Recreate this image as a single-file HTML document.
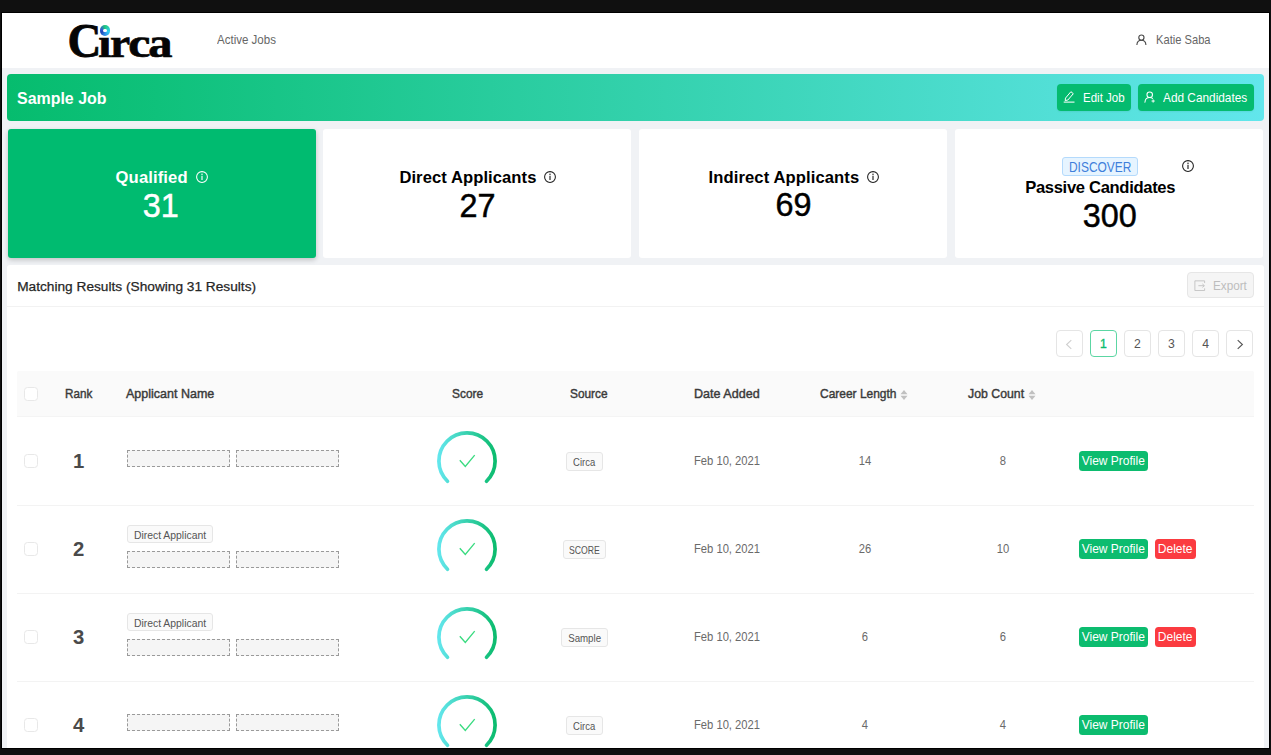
<!DOCTYPE html>
<html>
<head>
<meta charset="utf-8">
<title>Circa - Sample Job</title>
<style>
*{box-sizing:border-box;margin:0;padding:0}
html,body{width:1271px;height:755px;overflow:hidden;background:#101010}
body{position:relative;font-family:"Liberation Sans",sans-serif;color:#222;-webkit-font-smoothing:antialiased}
.abs{position:absolute}
#screen{position:absolute;left:2px;top:13px;width:1267px;height:735px;background:#f0f2f5;overflow:hidden;box-shadow:0 0 0 1px #000}
/* all children of #screen are positioned in page coords via negative offset wrapper */
#pg{position:absolute;left:-2px;top:-13px;width:1271px;height:755px}
#header{left:2px;top:13px;width:1267px;height:54.5px;background:#fff}
.t{position:absolute;white-space:nowrap;line-height:1}
#banner{left:7px;top:73.5px;width:1257px;height:47.5px;border-radius:4px;background:linear-gradient(90deg,#06bc6e 0%,#0fc17b 12%,#62e6ec 100%)}
.gbtn{position:absolute;top:84px;height:26.5px;background:#05bb6f;border-radius:4px;box-shadow:0 1px 2px rgba(0,0,0,.06)}
.card{position:absolute;top:128.5px;height:129px;width:308px;background:#fff;border-radius:3px}
.card.g{background:#00bb70;box-shadow:0 2px 5px rgba(0,0,0,.2)}
.ct{position:absolute;white-space:nowrap;font-weight:700;font-size:16.6px;line-height:1;color:#000}
.cn{position:absolute;white-space:nowrap;font-size:32.4px;line-height:1;color:#000;-webkit-text-stroke:.45px currentColor}
#panel{left:7px;top:265px;width:1257px;height:500px;background:#fff;border-radius:3px}
#thead{left:17px;top:371px;width:1236.5px;height:46px;background:#fafafa;border-bottom:1px solid #f4f4f4;border-radius:2px 2px 0 0}
.th{position:absolute;top:388px;font-size:12.6px;font-weight:400;-webkit-text-stroke:.42px #3a3a3a;color:#3a3a3a;white-space:nowrap;line-height:1;transform-origin:0 50%}
.rowline{position:absolute;left:17px;width:1236.5px;height:1px;background:#f3f3f3}
.cb{position:absolute;left:24.3px;width:13.7px;height:13.7px;border:1px solid #e8e8e8;border-radius:3.5px;background:#fff}
.rank{position:absolute;font-weight:700;font-size:20.3px;color:#4a4a4a;line-height:1;white-space:nowrap;transform:translateX(-50%)}
.ph{position:absolute;height:17px;width:103px;background:#f5f5f5;border:1px dashed #9a9a9a}
.tag{position:absolute;height:18.4px;border:1px solid #e6e6e6;background:#fafafa;border-radius:3px;font-size:10.4px;color:#555;line-height:20px;text-align:center;white-space:nowrap;overflow:hidden}
.cell{position:absolute;font-size:12.4px;color:#6a6a6a;line-height:1;white-space:nowrap;transform:translateX(-50%) scaleX(.905)}
.vbtn{position:absolute;left:1078.6px;width:69.4px;height:20.2px;background:#0cbc6f;border-radius:3.5px;color:#fff;font-size:12px;line-height:21.2px;text-align:center;white-space:nowrap}
.dbtn{position:absolute;left:1154.6px;width:41.2px;height:20.2px;background:#fb3b40;border-radius:3.5px;color:#fff;font-size:12px;line-height:21.2px;text-align:center;white-space:nowrap}
.pg{position:absolute;top:330px;width:27px;height:26.6px;border:1px solid #e5e5e5;border-radius:4px;background:#fff;font-size:12.2px;color:#555;text-align:center;line-height:26.6px}
.dash{position:absolute}
</style>
</head>
<body>
<div id="screen"><div id="pg">

<!-- HEADER -->
<div id="header" class="abs"></div>
<svg class="abs" id="logo" style="left:60px;top:18px" width="120" height="46" viewBox="60 18 120 46">
  <g font-family="Liberation Serif" font-weight="700" font-size="48" fill="#050505" stroke="#050505" stroke-width="0.8">
    <text transform="translate(69.4,56.7) scale(.977,1)" x="-2" y="0">C</text>
    <text transform="translate(99.2,56.7) scale(.983,.85)" x="-1" y="0">&#305;</text>
    <text transform="translate(111,56.7) scale(.945,.85)" x="-1" y="0">r</text>
    <text transform="translate(129.4,56.7) scale(1.04,.85)" x="-1" y="0">c</text>
    <text transform="translate(149.2,56.7) scale(1.01,.85)" x="-1" y="0">a</text>
  </g>
</svg>
<div class="abs" style="left:100.05px;top:25.45px;width:10.1px;height:10.1px;border-radius:50%;background:conic-gradient(from 0deg,#21c878 0%,#25cbb0 12%,#30cff2 30%,#2d8fe8 50%,#1f45b8 68%,#2a5fd0 80%,#21c878 100%)"></div>
<div class="abs" style="left:103.45px;top:28.85px;width:3.3px;height:3.3px;border-radius:50%;background:#fff"></div>
<div class="t" id="t_active" style="left:216.6px;top:34px;font-size:12.6px;color:#666;transform-origin:0 50%;transform:scaleX(.915)">Active Jobs</div>
<svg class="abs" style="left:1136.4px;top:33.5px" width="10.8" height="11.7" viewBox="0 0 12 13"><circle cx="6" cy="4" r="2.9" fill="none" stroke="#4a4a4a" stroke-width="1.25"/><path d="M1 12 C1.2 8.6 3.2 7 6 7 C8.8 7 10.8 8.6 11 12" fill="none" stroke="#4a4a4a" stroke-width="1.25" stroke-linecap="round"/></svg>
<div class="t" id="t_user" style="left:1156.3px;top:34px;font-size:12.6px;color:#666;transform-origin:0 50%;transform:scaleX(.885)">Katie Saba</div>

<!-- BANNER -->
<div id="banner" class="abs"></div>
<div class="t" id="t_job" style="left:17.2px;top:90px;font-size:16.2px;transform-origin:0 50%;transform:scaleX(.985);font-weight:700;color:#fff">Sample Job</div>
<div class="gbtn" style="left:1056.8px;width:73.8px"></div>
<div class="gbtn" style="left:1137.6px;width:116px"></div>
<svg class="abs" style="left:1063.2px;top:90.2px" width="13" height="13" viewBox="0 0 13 13"><path d="M2.5 8.1 L7.9 1.7 L10.3 3.7 L4.9 10 L2.2 10.6 Z" fill="none" stroke="#fff" stroke-width="1" stroke-linejoin="round"/><path d="M0.7 12.1 H11.5" stroke="#fff" stroke-width="1.05" fill="none"/></svg>
<div class="t" id="t_edit" style="left:1082.5px;top:91.5px;font-size:12.4px;color:#fff;transform-origin:0 50%;transform:scaleX(.93)">Edit Job</div>
<svg class="abs" style="left:1144.4px;top:91px" width="12.4" height="12.2" viewBox="0 0 13 13" preserveAspectRatio="none"><circle cx="6" cy="4" r="2.9" fill="none" stroke="#fff" stroke-width="1.1"/><path d="M1 12 C1.2 8.6 3.2 7 6 7 C7.2 7 8.2 7.3 9 7.9" fill="none" stroke="#fff" stroke-width="1.1" stroke-linecap="round"/><path d="M9.6 9 V12.4 M7.9 10.7 H11.3" stroke="#fff" stroke-width="1" fill="none"/></svg>
<div class="t" id="t_add" style="left:1163.2px;top:91.5px;font-size:12.4px;color:#fff;transform-origin:0 50%;transform:scaleX(.955)">Add Candidates</div>

<!-- CARDS -->
<div class="card g" style="left:7.6px"></div>
<div class="card" style="left:323.3px"></div>
<div class="card" style="left:639.2px"></div>
<div class="card" style="left:955.2px"></div>

<div class="ct" id="t_q" style="left:115.6px;top:169.7px;color:#fff;letter-spacing:.12px">Qualified</div>
<div class="cn" id="n_q" style="left:142.7px;top:189.8px;color:#fff">31</div>
<div class="ct" id="t_d" style="left:399.4px;top:169.7px;letter-spacing:.07px">Direct Applicants</div>
<div class="cn" id="n_d" style="left:459.4px;top:189.8px">27</div>
<div class="ct" id="t_i" style="left:708.6px;top:169.7px;letter-spacing:.1px">Indirect Applicants</div>
<div class="cn" id="n_i" style="left:775.6px;top:189.4px">69</div>
<div class="abs" id="disc" style="left:1062.1px;top:157.1px;width:75.5px;height:18.8px;border:1px solid #b4dafc;border-radius:3px;background:#e6f4ff"></div>
<div class="t" id="t_disc" style="left:1069px;top:161.2px;font-size:13.8px;color:#3f7fdb;transform-origin:0 50%;transform:scaleX(.865)">DISCOVER</div>
<div class="ct" id="t_p" style="left:1025.2px;top:180px;letter-spacing:-.33px">Passive Candidates</div>
<div class="cn" id="n_p" style="left:1082.8px;top:199.8px">300</div>

<svg class="abs" style="left:194.8px;top:170px" width="14" height="14" viewBox="-7 -7 14 14"><circle cx="0" cy="0" r="5.4" fill="none" stroke="#fff" stroke-width="1.05"/><circle cx="0" cy="-2.7" r="0.75" fill="#fff"/><path d="M0 -1.2 V3" stroke="#fff" stroke-width="1.15" fill="none"/></svg>
<svg class="abs" style="left:543.1px;top:170px" width="14" height="14" viewBox="-7 -7 14 14"><circle cx="0" cy="0" r="5.4" fill="none" stroke="#1f1f1f" stroke-width="1.05"/><circle cx="0" cy="-2.7" r="0.75" fill="#1f1f1f"/><path d="M0 -1.2 V3" stroke="#1f1f1f" stroke-width="1.15" fill="none"/></svg>
<svg class="abs" style="left:865.9px;top:170px" width="14" height="14" viewBox="-7 -7 14 14"><circle cx="0" cy="0" r="5.4" fill="none" stroke="#1f1f1f" stroke-width="1.05"/><circle cx="0" cy="-2.7" r="0.75" fill="#1f1f1f"/><path d="M0 -1.2 V3" stroke="#1f1f1f" stroke-width="1.15" fill="none"/></svg>
<svg class="abs" style="left:1181px;top:159px" width="14" height="14" viewBox="-7 -7 14 14"><circle cx="0" cy="0" r="5.4" fill="none" stroke="#1f1f1f" stroke-width="1.05"/><circle cx="0" cy="-2.7" r="0.75" fill="#1f1f1f"/><path d="M0 -1.2 V3" stroke="#1f1f1f" stroke-width="1.15" fill="none"/></svg>

<!-- PANEL -->
<div id="panel" class="abs"></div>
<div class="t" id="t_match" style="left:17.2px;top:280px;font-size:13.7px;color:#262626;-webkit-text-stroke:.25px #262626">Matching Results (Showing 31 Results)</div>
<div class="abs" style="left:7px;top:306px;width:1257px;height:1px;background:#f2f2f2"></div>
<div class="abs" id="export" style="left:1187.3px;top:271.8px;width:66.5px;height:26.6px;border:1px solid #e6e6e6;border-radius:4px;background:#f5f5f5"></div>
<svg class="abs" style="left:1194px;top:279.6px" width="12" height="11.4" viewBox="0 0 12 12" preserveAspectRatio="none"><path d="M10.6 3.2 V0.9 H0.9 V11.1 H10.6 V8.8" fill="none" stroke="#c4c4c4" stroke-width="1"/><path d="M4.4 6 H10.2 M8.4 4.2 L10.4 6 L8.4 7.8" fill="none" stroke="#c4c4c4" stroke-width="1"/></svg>
<div class="t" id="t_export" style="left:1212.8px;top:279.7px;font-size:12.4px;color:#bdbdbd;transform-origin:0 50%;transform:scaleX(.945)">Export</div>

<!-- PAGINATION -->
<div class="pg" style="left:1055.5px"></div>
<div class="pg" id="pg1" style="left:1089.9px;border-color:#5cd6a3;color:#0cbc6f;-webkit-text-stroke:.35px #0cbc6f">1</div>
<div class="pg" style="left:1124px">2</div>
<div class="pg" style="left:1158px">3</div>
<div class="pg" style="left:1192.2px">4</div>
<div class="pg" style="left:1226.4px"></div>
<svg class="abs" style="left:1064.7px;top:338.8px" width="8" height="11" viewBox="0 0 8 11"><path d="M6.3 1.2 L1.6 5.5 L6.3 9.8" fill="none" stroke="#cfcfcf" stroke-width="1.1"/></svg>
<svg class="abs" style="left:1236px;top:338.8px" width="8" height="11" viewBox="0 0 8 11"><path d="M1.7 1.2 L6.4 5.5 L1.7 9.8" fill="none" stroke="#555" stroke-width="1.1"/></svg>

<!-- TABLE HEAD -->
<div id="thead" class="abs"></div>
<div class="cb" style="top:387px"></div>
<div class="th" id="h_rank" style="left:65.2px;transform:scaleX(0.93)">Rank</div>
<div class="th" id="h_name" style="left:126.3px;transform:scaleX(0.993)">Applicant Name</div>
<div class="th" id="h_score" style="left:451.8px;transform:scaleX(0.945)">Score</div>
<div class="th" id="h_source" style="left:569.6px;transform:scaleX(0.942)">Source</div>
<div class="th" id="h_date" style="left:694.1px;transform:scaleX(0.997)">Date Added</div>
<div class="th" id="h_career" style="left:819.8px;transform:scaleX(0.95)">Career Length</div>
<div class="th" id="h_job" style="left:968.2px;transform:scaleX(0.977)">Job Count</div>
<svg class="abs" style="left:900.3px;top:388.5px" width="8" height="12" viewBox="0 0 8 12"><path d="M4 1.1 L7.5 5.2 H0.5 Z" fill="#c0c0c0"/><path d="M4 11 L7.5 6.8 H0.5 Z" fill="#c0c0c0"/></svg>
<svg class="abs" style="left:1028.2px;top:388.5px" width="8" height="12" viewBox="0 0 8 12"><path d="M4 1.1 L7.5 5.2 H0.5 Z" fill="#c0c0c0"/><path d="M4 11 L7.5 6.8 H0.5 Z" fill="#c0c0c0"/></svg>

<!-- ROWS inserted below -->
<!--ROWS-->
<svg width="0" height="0" style="position:absolute"><defs><linearGradient id="dg" x1="0" y1="0" x2="1" y2="0"><stop offset="0" stop-color="#62e6ec"/><stop offset="1" stop-color="#0cbc6f"/></linearGradient></defs></svg>
<div class="cb" style="top:454.15px"></div>
<div class="rank" id="rank1" style="left:78.6px;top:451px">1</div>
<div class="ph" style="left:126.5px;top:450px"></div>
<div class="ph" style="left:235.7px;top:450px"></div>
<svg class="dash" style="left:435.2px;top:429px" width="64" height="64" viewBox="0 0 64 64"><path d="M12.48 52.21 A28.1 28.1 0 1 1 51.52 52.21" fill="none" stroke="url(#dg)" stroke-width="3.7" stroke-linecap="round"/><path d="M24.8 31.2 L30.3 37.5 L39.7 26.1" fill="none" stroke="#3adb80" stroke-width="1.35"/></svg>
<div class="tag" id="src1" style="left:566.1px;top:452.2px;width:37px"><span style="display:inline-block;transform:scaleX(0.91)">Circa</span></div>
<div class="cell" id="date1" style="left:726.5px;top:455.4px">Feb 10, 2021</div>
<div class="cell" style="left:864.5px;top:455.4px">14</div>
<div class="cell" style="left:1002.7px;top:455.4px">8</div>
<div class="vbtn" id="vb1" style="top:451.1px">View Profile</div>
<div class="rowline" style="top:505px"></div>
<div class="cb" style="top:542.15px"></div>
<div class="rank" id="rank2" style="left:78.6px;top:539px">2</div>
<div class="tag" id="da2" style="left:127px;top:525.1px;width:86px">Direct Applicant</div>
<div class="ph" style="left:126.5px;top:551px"></div>
<div class="ph" style="left:235.7px;top:551px"></div>
<svg class="dash" style="left:435.2px;top:517px" width="64" height="64" viewBox="0 0 64 64"><path d="M12.48 52.21 A28.1 28.1 0 1 1 51.52 52.21" fill="none" stroke="url(#dg)" stroke-width="3.7" stroke-linecap="round"/><path d="M24.8 31.2 L30.3 37.5 L39.7 26.1" fill="none" stroke="#3adb80" stroke-width="1.35"/></svg>
<div class="tag" id="src2" style="left:563.1px;top:540.2px;width:43px"><span style="display:inline-block;transform:scaleX(0.835)">SCORE</span></div>
<div class="cell" id="date2" style="left:726.5px;top:543.4px">Feb 10, 2021</div>
<div class="cell" style="left:864.5px;top:543.4px">26</div>
<div class="cell" style="left:1002.7px;top:543.4px">10</div>
<div class="vbtn" id="vb2" style="top:539.1px">View Profile</div>
<div class="dbtn" id="db2" style="top:539.1px">Delete</div>
<div class="rowline" style="top:593px"></div>
<div class="cb" style="top:630.15px"></div>
<div class="rank" id="rank3" style="left:78.6px;top:627px">3</div>
<div class="tag" id="da3" style="left:127px;top:613.1px;width:86px">Direct Applicant</div>
<div class="ph" style="left:126.5px;top:639px"></div>
<div class="ph" style="left:235.7px;top:639px"></div>
<svg class="dash" style="left:435.2px;top:605px" width="64" height="64" viewBox="0 0 64 64"><path d="M12.48 52.21 A28.1 28.1 0 1 1 51.52 52.21" fill="none" stroke="url(#dg)" stroke-width="3.7" stroke-linecap="round"/><path d="M24.8 31.2 L30.3 37.5 L39.7 26.1" fill="none" stroke="#3adb80" stroke-width="1.35"/></svg>
<div class="tag" id="src3" style="left:561.1px;top:628.2px;width:47px"><span style="display:inline-block;transform:scaleX(0.935)">Sample</span></div>
<div class="cell" id="date3" style="left:726.5px;top:631.4px">Feb 10, 2021</div>
<div class="cell" style="left:864.5px;top:631.4px">6</div>
<div class="cell" style="left:1002.7px;top:631.4px">6</div>
<div class="vbtn" id="vb3" style="top:627.1px">View Profile</div>
<div class="dbtn" id="db3" style="top:627.1px">Delete</div>
<div class="rowline" style="top:681px"></div>
<div class="cb" style="top:718.15px"></div>
<div class="rank" id="rank4" style="left:78.6px;top:715px">4</div>
<div class="ph" style="left:126.5px;top:714px"></div>
<div class="ph" style="left:235.7px;top:714px"></div>
<svg class="dash" style="left:435.2px;top:693px" width="64" height="64" viewBox="0 0 64 64"><path d="M12.48 52.21 A28.1 28.1 0 1 1 51.52 52.21" fill="none" stroke="url(#dg)" stroke-width="3.7" stroke-linecap="round"/><path d="M24.8 31.2 L30.3 37.5 L39.7 26.1" fill="none" stroke="#3adb80" stroke-width="1.35"/></svg>
<div class="tag" id="src4" style="left:566.1px;top:716.2px;width:37px"><span style="display:inline-block;transform:scaleX(0.91)">Circa</span></div>
<div class="cell" id="date4" style="left:726.5px;top:719.4px">Feb 10, 2021</div>
<div class="cell" style="left:864.5px;top:719.4px">4</div>
<div class="cell" style="left:1002.7px;top:719.4px">4</div>
<div class="vbtn" id="vb4" style="top:715.1px">View Profile</div>
<!--/ROWS-->

</div></div>
</body>
</html>
